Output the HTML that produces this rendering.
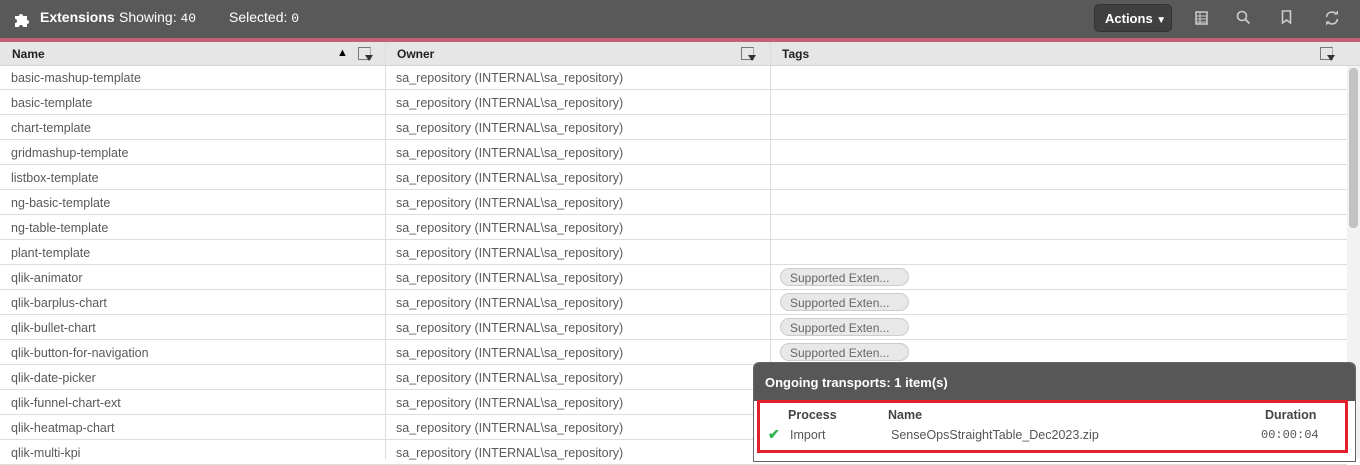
<!DOCTYPE html>
<html><head><meta charset="utf-8"><style>
*{box-sizing:border-box;margin:0;padding:0}
body{width:1360px;height:459px;overflow:hidden;background:#fff;font-family:"Liberation Sans",sans-serif;position:relative}
.top{position:absolute;left:0;top:0;width:1360px;height:38px;background:#595959;color:#fff}
.pink{position:absolute;left:0;top:38px;width:1360px;height:4px;background:#c3617a}
.top .t{position:absolute;top:9px;font-size:14px}
.hdr{position:absolute;left:0;top:42px;width:1360px;height:24px;background:#e6e6e6;border-bottom:1px solid #d6d6d6}
.hdr div{position:absolute;top:5px;font-size:12px;font-weight:bold;color:#222}
.row{position:absolute;left:0;width:1347px;height:25px;border-bottom:1px solid #ddd;font-size:12.5px;color:#595959}
.row span{position:absolute;top:6px}
.vl{position:absolute;top:42px;width:1px;height:417px;background:#ddd}
.tag{position:absolute;left:780px;top:3px;width:129px;height:18px;border:1px solid #ccc;border-radius:9px;background:#e8e8e8;font-size:12px;color:#666;padding:2px 0 0 9px}
.filt{position:absolute;top:5px;width:13px;height:13px;border:1px solid #777;border-right-color:#aaa}
.filt:after{content:"";position:absolute;right:-3px;bottom:-2px;border-left:4px solid transparent;border-right:4px solid transparent;border-top:6px solid #333}
.panel{position:absolute;left:753px;top:362px;width:603px;height:100px;background:#fff;border:1px solid #666;border-radius:6px 6px 0 0;overflow:hidden}
.ph{height:38px;background:#575757;color:#fff;font-weight:bold;font-size:13px;padding:12px 0 0 11px}
.red{position:absolute;left:3px;top:37px;width:591px;height:53px;border:3px solid #e3202b}
.red div{position:absolute;font-size:12.5px}
</style></head><body>
<div class="top">
<svg style="position:absolute;left:14px;top:11px" width="16" height="16" viewBox="0 0 16 16"><path fill="#fff" d="M1 5h4a2 2 0 1 1 4 0h4v4a2 2 0 1 1 0 4v3H9a2 2 0 1 0-4 0H1v-4a2 2 0 1 0 0-4z"/></svg>
<div class="t" style="left:40px;font-weight:bold">Extensions</div>
<div class="t" style="left:119px">Showing: <span style="font-family:'Liberation Mono',monospace;font-size:13px">40</span></div>
<div class="t" style="left:229px">Selected: <span style="font-family:'Liberation Mono',monospace;font-size:13px">0</span></div>
<div style="position:absolute;left:1094px;top:4px;width:78px;height:28px;background:#404040;border:1px solid #333;border-radius:5px;font-weight:bold;font-size:13px;padding:6px 0 0 10px">Actions <span style="font-size:10px">▼</span></div>
<svg style="position:absolute;left:1195px;top:11px" width="13" height="14" viewBox="0 0 13 14"><rect x="1" y="1" width="11" height="12" fill="none" stroke="#ccc" stroke-width="1.5"/><path d="M1 5h11M1 8h11M1 11h11M5 1v12" stroke="#ccc"/></svg>
<svg style="position:absolute;left:1236px;top:10px" width="15" height="15" viewBox="0 0 15 15"><circle cx="6" cy="6" r="4.5" fill="none" stroke="#ccc" stroke-width="1.6"/><path d="M9.5 9.5l4 4" stroke="#ccc" stroke-width="1.8"/></svg>
<svg style="position:absolute;left:1281px;top:10px" width="11" height="15" viewBox="0 0 11 15"><path d="M1.5 1h8v12l-4-3-4 3z" fill="none" stroke="#ccc" stroke-width="1.6"/></svg>
<svg style="position:absolute;left:1324px;top:10px" width="16" height="16" viewBox="0 0 16 16"><path d="M2.5 7a5.5 5.5 0 0 1 10-2.5M13.5 9a5.5 5.5 0 0 1-10 2.5" fill="none" stroke="#ccc" stroke-width="1.6"/><path d="M10 4.5h4v-4zM6 11.5H2v4z" fill="#ccc"/></svg>
</div>
<div class="pink"></div>
<div class="hdr">
<div style="left:12px">Name</div><div style="left:397px">Owner</div><div style="left:782px">Tags</div>
<span style="position:absolute;left:337px;top:5px;font-size:11px;color:#000">▲</span>
<span class="filt" style="left:358px"></span><span class="filt" style="left:741px"></span><span class="filt" style="left:1320px"></span>
</div>
<div id="rows"></div>
<div class="vl" style="left:385px"></div><div class="vl" style="left:770px"></div>
<div style="position:absolute;left:1347px;top:66px;width:13px;height:393px;background:#f2f2f2"></div>
<div style="position:absolute;left:1349px;top:68px;width:9px;height:160px;background:#c2c2c2;border-radius:4px"></div>
<script>
var n=["basic-mashup-template","basic-template","chart-template","gridmashup-template","listbox-template","ng-basic-template","ng-table-template","plant-template","qlik-animator","qlik-barplus-chart","qlik-bullet-chart","qlik-button-for-navigation","qlik-date-picker","qlik-funnel-chart-ext","qlik-heatmap-chart","qlik-multi-kpi"];
var h="";n.forEach(function(s,i){h+='<div class="row" style="top:'+(65+i*25)+'px"><span style="left:11px">'+s+'</span><span style="left:396px">sa_repository (INTERNAL\\sa_repository)</span>'+(i>=8?'<div class="tag">Supported Exten...</div>':'')+'</div>'});
document.getElementById("rows").innerHTML=h;
</script>
<div class="panel">
<div class="ph">Ongoing transports: 1 item(s)</div>
<div class="red">
<div style="left:28px;top:5px;font-weight:bold;color:#444">Process</div>
<div style="left:128px;top:5px;font-weight:bold;color:#444">Name</div>
<div style="left:505px;top:5px;font-weight:bold;color:#444">Duration</div>
<div style="left:8px;top:23px;color:#2bb24c;font-weight:bold;font-size:14px">✔</div>
<div style="left:30px;top:25px;color:#555">Import</div>
<div style="left:131px;top:25px;color:#555">SenseOpsStraightTable_Dec2023.zip</div>
<div style="left:501px;top:25px;color:#555;font-family:'Liberation Mono',monospace;font-size:12px">00:00:04</div>
</div>
</div>
</body></html>
